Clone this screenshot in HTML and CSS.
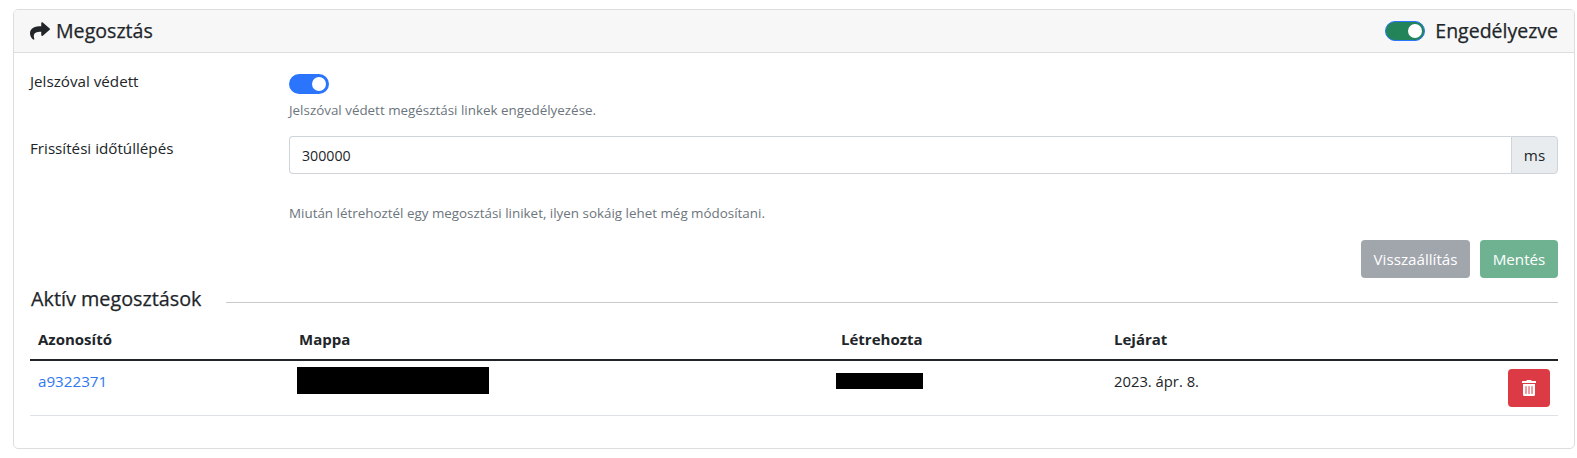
FILE: index.html
```html
<!DOCTYPE html>
<html lang="hu">
<head>
<meta charset="utf-8">
<title>Megosztás</title>
<link rel="stylesheet" href="styles.css">
</head>
<body>
<section class="card">
  <header class="card-header">
    <h2 class="card-title">
      <svg class="share-icon" viewBox="0 0 512 512"><path d="M503.691 189.836L327.687 37.851C312.281 24.546 288 35.347 288 56.015v80.053C127.371 137.907 0 170.1 0 322.326c0 61.441 39.581 122.309 83.333 154.132 13.653 9.931 33.111-2.533 28.077-18.631C66.066 312.814 132.917 274.316 288 272.085V360c0 20.7 24.3 31.453 39.687 18.164l176.004-152c11.071-9.562 11.086-26.753 0-36.328z"/></svg>
      Megosztás
    </h2>
    <div class="enabled">
      <span class="switch switch-green"><span class="knob"></span></span>
      <span>Engedélyezve</span>
    </div>
  </header>
  <div class="card-body">
    <div class="form-row row-password">
      <label class="form-label">Jelszóval védett</label>
      <div class="form-field">
        <span class="switch switch-blue"><span class="knob"></span></span>
        <p class="hint hint-password">Jelszóval védett megésztási linkek engedélyezése.</p>
      </div>
    </div>
    <div class="form-row row-timeout">
      <label class="form-label">Frissítési időtúllépés</label>
      <div class="form-field">
        <div class="input-group">
          <input class="input" type="text" value="300000">
          <span class="addon">ms</span>
        </div>
        <p class="hint hint-timeout">Miután létrehoztél egy megosztási liniket, ilyen sokáig lehet még módosítani.</p>
      </div>
    </div>
    <div class="actions">
      <button class="btn btn-reset" type="button">Visszaállítás</button>
      <button class="btn btn-save" type="button">Mentés</button>
    </div>
    <div class="section-title">
      <h3>Aktív megosztások</h3>
      <span class="section-line"></span>
    </div>
    <table class="shares">
      <thead>
        <tr>
          <th class="col-id">Azonosító</th>
          <th class="col-folder">Mappa</th>
          <th class="col-owner">Létrehozta</th>
          <th class="col-expiry">Lejárat</th>
          <th></th>
        </tr>
      </thead>
      <tbody>
        <tr>
          <td><a class="link" href="#">a9322371</a></td>
          <td><span class="redact redact-folder"></span></td>
          <td><span class="redact redact-owner"></span></td>
          <td class="cell-date">2023. ápr. 8.</td>
          <td class="cell-action">
            <button class="btn-delete" type="button" aria-label="Törlés">
              <svg class="trash-icon" viewBox="0 0 448 512"><path d="M32 464a48 48 0 0 0 48 48h288a48 48 0 0 0 48-48V128H32zm272-256a16 16 0 0 1 32 0v224a16 16 0 0 1-32 0zm-96 0a16 16 0 0 1 32 0v224a16 16 0 0 1-32 0zm-96 0a16 16 0 0 1 32 0v224a16 16 0 0 1-32 0zM432 32H312l-9.4-18.7A24 24 0 0 0 281.1 0H166.8a23.72 23.72 0 0 0-21.4 13.3L136 32H16A16 16 0 0 0 0 48v32a16 16 0 0 0 16 16h416a16 16 0 0 0 16-16V48a16 16 0 0 0-16-16z"/></svg>
            </button>
          </td>
        </tr>
      </tbody>
    </table>
  </div>
</section>
</body>
</html>
```
FILE: styles.css
```css
* { box-sizing: border-box; }
html, body { background: #fff; }
body {
  margin: 9px 2px 0 13px;
  font-family: "Open Sans", "Noto Sans", "Liberation Sans", sans-serif;
  font-size: 15.2px;
  line-height: 21px;
  color: #212529;
}
.card {
  height: 440px;
  border: 1px solid #dcdddf;
  border-radius: 5px;
  overflow: hidden;
}
.card-header {
  height: 43px;
  padding: 0 16px;
  display: flex;
  align-items: center;
  justify-content: space-between;
  background: #f7f7f7;
  border-bottom: 1px solid #dcdddf;
}
.card-title {
  margin: 0;
  display: flex;
  align-items: center;
  gap: 6px;
  font-size: 19.6px;
  font-weight: 500;
  line-height: 24px;
  -webkit-text-stroke: 0.25px #212529;
}
.share-icon { width: 20px; height: 20px; fill: #212529; }
.enabled {
  display: flex;
  align-items: center;
  gap: 10px;
  font-size: 19.5px;
  font-weight: 500;
  line-height: 24px;
  -webkit-text-stroke: 0.25px #212529;
}
.switch {
  display: block;
  width: 40px;
  height: 20px;
  border-radius: 10px;
  position: relative;
}
.switch-blue { background: #2a75fb; }
.switch-green { background: #23845a; border: 1px solid #2a75fb; }
.knob {
  position: absolute;
  top: 3px;
  right: 3px;
  width: 14px;
  height: 14px;
  border-radius: 50%;
  background: #fff;
}
.switch-green .knob { top: 2px; right: 2px; }
.card-body { padding: 21px 16px 0; }
.form-row { display: flex; }
.form-label { width: 259px; flex: none; }
.form-field { flex: 1; min-width: 0; }
.row-password { height: 62px; }
.row-password .form-label { margin-top: -3px; }
.row-timeout .form-label { margin-top: 2px; }
.hint { margin: 0; font-size: 13.4px; line-height: 18px; color: #6c757d; }
.hint-password { margin-top: 7px; }
.hint-timeout { margin-top: 30px; }
.input-group { display: flex; height: 38px; }
.input {
  flex: 1;
  min-width: 0;
  height: 38px;
  padding: 0 12px;
  font: inherit;
  font-size: 14.2px;
  color: #212529;
  border: 1px solid #ced4da;
  border-right: 0;
  border-radius: 4px 0 0 4px;
  outline: none;
}
.addon {
  width: 47px;
  flex: none;
  display: flex;
  align-items: center;
  justify-content: center;
  background: #e9ecef;
  border: 1px solid #ced4da;
  border-radius: 0 4px 4px 0;
}
.actions { display: flex; justify-content: flex-end; gap: 10px; margin-top: 18px; }
.btn {
  height: 38px;
  padding: 0;
  font: inherit;
  color: #fff;
  border: 0;
  border-radius: 4px;
}
.btn-reset { width: 109px; background: #a1a5ac; }
.btn-save { width: 78px; background: #6fb292; }
.section-title { display: flex; align-items: center; margin-top: 9px; height: 24px; }
.section-title h3 { margin: 0 0 0 1px; font-size: 19.8px; font-weight: 500; line-height: 24px; -webkit-text-stroke: 0.25px #212529; }
.section-line { flex: 1; height: 1px; background: #c9c9c9; margin: 6px 0 0 24px; }
.shares { width: 100%; border-collapse: collapse; table-layout: fixed; margin-top: 7px; }
.shares th {
  height: 42px;
  padding: 1px 8px 0;
  text-align: left;
  font-size: 15px;
  font-weight: 700;
  border-bottom: 2px solid #212529;
}
.shares td { height: 55px; padding: 10px 8px 0; border-bottom: 1px solid #dee2e6; vertical-align: top; }
.shares .cell-action { padding-top: 8px; text-align: right; }
.shares .cell-date { font-size: 14.8px; }
.col-id { width: 261px; }
.col-folder { width: 542px; }
.col-owner { width: 273px; }
.col-expiry { width: 200px; }
.link { color: #2f78f0; text-decoration: none; }
.redact { display: block; background: #000; }
.redact-folder { width: 192px; height: 27px; margin: -4px 0 0 -2px; }
.redact-owner { width: 87px; height: 16px; margin: 2px 0 0 -5px; }
.btn-delete {
  width: 42px;
  height: 38px;
  display: inline-flex;
  align-items: center;
  justify-content: center;
  padding: 0;
  background: #dc3a45;
  border: 0;
  border-radius: 4px;
  vertical-align: top;
}
.trash-icon { width: 14px; height: 16px; fill: #fff; }
```
